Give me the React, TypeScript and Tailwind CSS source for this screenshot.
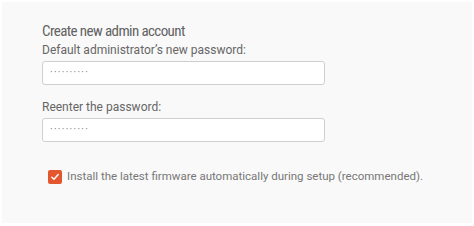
export default function App() {
  return (
    <div className="h-[226px] w-[474px] bg-white p-[2px] font-['Roboto',sans-serif]">
      <div className="h-[221px] w-[470px] bg-[#f9f9f9] pl-[40px] pt-[19px] text-[#666]">
        <h1 className="font-['Roboto_Condensed','Roboto',sans-serif] text-[15px] leading-[20px] tracking-[-0.6px] text-[#626262]">
          Create new admin account
        </h1>
        <PasswordField label="Default administrator’s new password:" />
        <div className="h-[13px]" />
        <PasswordField label="Reenter the password:" />
        <label className="mt-[26px] flex items-center gap-[5px] pl-[6px] text-[11.5px] text-[#777]">
          <span className="flex size-[14px] items-center justify-center rounded-[2px] bg-[#e4572e]">
            <svg viewBox="0 0 14 14" className="size-[10px]" fill="none">
              <path d="M2.5 7.2 L5.6 10.2 L11.5 3.6" stroke="white" strokeWidth="2" strokeLinecap="round" strokeLinejoin="round" />
            </svg>
          </span>
          Install the latest firmware automatically during setup (recommended).
        </label>
      </div>
    </div>
  )
}

function PasswordField({ label }: { label: string }) {
  return (
    <div>
      <p className="mt-[1px] text-[12px] leading-[16px] text-[#666]">{label}</p>
      <div className="mt-[3px] flex h-[24px] w-[283px] items-center rounded-[3px] border border-[#cfcfcf] bg-white pl-[7px]">
        <span className="text-[10px] leading-none tracking-[1.3px] text-[#777]">··········</span>
      </div>
    </div>
  )
}
